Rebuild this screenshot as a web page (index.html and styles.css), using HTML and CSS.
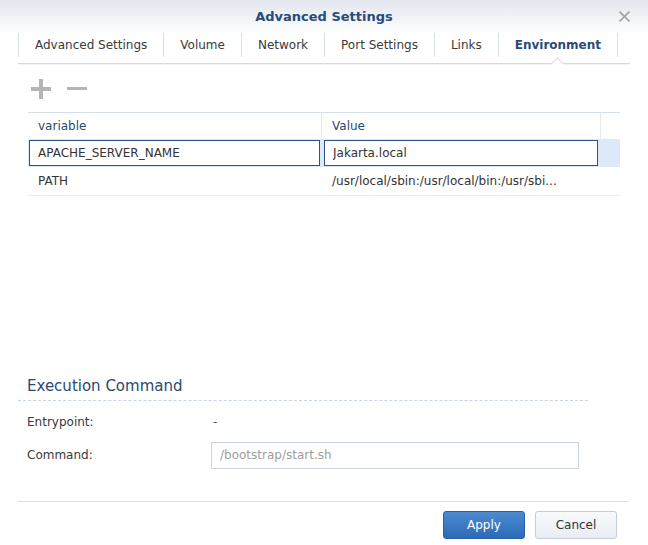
FILE: index.html
```html
<!DOCTYPE html>
<html lang="en">
<head>
    <meta charset="UTF-8">
    <meta name="viewport" content="width=device-width, initial-scale=1.0">
    <title>Advanced Settings</title>
    <link rel="stylesheet" href="styles.css">
</head>
<body>
    <div class="dialog">
        <div class="titlebar">
            <span></span>
            <h1 class="title">Advanced Settings</h1>
            <button class="close-button" title="Close">
                <svg width="11" height="11" viewBox="0 0 11 11">
                    <path d="M0.5 0.5 L10.5 10.5 M10.5 0.5 L0.5 10.5" stroke="#a3a3a3" stroke-width="1.6" fill="none"/>
                </svg>
            </button>
        </div>

        <div class="tabs">
            <div class="tab">Advanced Settings</div>
            <div class="tab">Volume</div>
            <div class="tab">Network</div>
            <div class="tab">Port Settings</div>
            <div class="tab">Links</div>
            <div class="tab active">Environment</div>
        </div>

        <div class="content">
            <div class="env-panel">
                <div class="toolbar">
                    <button class="icon-button" title="Add">
                        <svg width="20" height="20" viewBox="0 0 20 20">
                            <rect x="0" y="8" width="20" height="4" fill="#b5b5b5"/>
                            <rect x="8" y="0" width="4" height="20" fill="#b5b5b5"/>
                        </svg>
                    </button>
                    <button class="icon-button" title="Remove">
                        <svg width="20" height="20" viewBox="0 0 20 20">
                            <rect x="0" y="8" width="20" height="3" fill="#b5b5b5"/>
                        </svg>
                    </button>
                </div>

                <div class="grid">
                    <div class="grid-row grid-header">
                        <div class="cell col-var">variable</div>
                        <div class="cell col-val">Value</div>
                        <div class="cell col-scroll"></div>
                    </div>
                    <div class="grid-row selected">
                        <div class="cell col-var"><input class="cell-input" type="text" value="APACHE_SERVER_NAME"></div>
                        <div class="cell col-val"><input class="cell-input" type="text" value="Jakarta.local"></div>
                        <div class="cell col-scroll"></div>
                    </div>
                    <div class="grid-row last">
                        <div class="cell col-var">PATH</div>
                        <div class="cell col-val">/usr/local/sbin:/usr/local/bin:/usr/sbi...</div>
                        <div class="cell col-scroll"></div>
                    </div>
                </div>
            </div>

            <div class="exec-section">
                <h2 class="section-title">Execution Command</h2>
                <div class="field-grid">
                    <label class="field-label">Entrypoint:</label>
                    <span class="field-value">-</span>
                    <label class="field-label">Command:</label>
                    <input class="text-input" type="text" placeholder="/bootstrap/start.sh">
                </div>
            </div>
        </div>

        <div class="footer">
            <button class="btn btn-primary">Apply</button>
            <button class="btn">Cancel</button>
        </div>
    </div>
</body>
</html>
```

FILE: styles.css
```css
body {
    margin: 0;
    padding: 0;
    background-color: #ffffff;
    font-family: "DejaVu Sans", Verdana, sans-serif;
    font-size: 12px;
    color: #333333;
}

.dialog {
    width: 648px;
    height: 545px;
    display: flex;
    flex-direction: column;
    background: linear-gradient(#e1e6ed 0, #ffffff 34px);
}

.titlebar {
    height: 33px;
    display: grid;
    grid-template-columns: 32px 1fr 32px;
    align-items: center;
    padding: 0 8px;
}

.title {
    margin: 0;
    text-align: center;
    font-size: 13px;
    font-weight: bold;
    color: #2a4b79;
}

.close-button {
    width: 32px;
    height: 32px;
    padding: 0;
    border: none;
    background: none;
    display: flex;
    justify-content: center;
    align-items: center;
    cursor: pointer;
}

.tabs {
    display: flex;
    margin: 0 18px;
    padding-bottom: 6px;
    border-bottom: 1px solid #d9d9d9;
    box-shadow: 0 1px 1px rgba(0, 0, 0, 0.04);
}

.tab {
    position: relative;
    height: 24px;
    line-height: 24px;
    padding: 0 16px;
    border-left: 1px solid #d6dee7;
    color: #3a3a3a;
    cursor: pointer;
}

.tab:last-child {
    border-right: 1px solid #d6dee7;
}

.tab.active {
    font-weight: bold;
    color: #2a4b79;
}

.tab.active::after {
    content: "";
    position: absolute;
    box-sizing: border-box;
    width: 9px;
    height: 9px;
    left: calc(50% - 4.5px);
    top: 26px;
    background-color: #ffffff;
    border-left: 1px solid #d9d9d9;
    border-top: 1px solid #d9d9d9;
    transform: rotate(45deg);
}

.content {
    flex: 1;
    padding: 0 18px;
}

.env-panel {
    box-sizing: border-box;
    height: 312px;
    padding: 15px 10px 0 10px;
}

.toolbar {
    display: flex;
    gap: 16px;
    padding-left: 3px;
    height: 20px;
}

.icon-button {
    width: 20px;
    height: 20px;
    padding: 0;
    border: none;
    background: none;
    cursor: pointer;
}

.grid {
    margin-top: 13px;
    border-top: 1px solid #d5dfea;
}

.grid-row {
    display: flex;
    height: 28px;
    align-items: stretch;
}

.grid-row.last {
    height: 29px;
    border-bottom: 1px solid #e6e9ed;
    box-sizing: border-box;
}

.grid-header {
    height: 26px;
}

.grid-header .cell {
    color: #2c4a70;
}

.grid-header .col-var,
.grid-header .col-val {
    border-right: 1px solid #e3e9f0;
}

.grid-row.selected {
    background-color: #dde9f8;
}

.cell {
    display: flex;
    align-items: center;
    padding: 0 10px;
    box-sizing: border-box;
    white-space: nowrap;
    overflow: hidden;
}

.col-var {
    width: 294px;
}

.col-val {
    width: 279px;
}

.col-scroll {
    width: 16px;
    padding: 0;
}

.selected .col-var {
    padding: 1px 2px 1px 1px;
}

.selected .col-val {
    padding: 1px 3px 1px 2px;
}

.cell-input {
    width: 100%;
    height: 26px;
    box-sizing: border-box;
    margin: 0;
    padding: 0 8px;
    border: 1px solid #2b5185;
    outline: none;
    font-family: inherit;
    font-size: 12px;
    color: #333333;
    background-color: #ffffff;
}

.exec-section {
    width: 570px;
}

.section-title {
    margin: 0;
    padding: 0 0 4px 9px;
    line-height: 20px;
    font-size: 15px;
    font-weight: normal;
    color: #2a486e;
    border-bottom: 1px dashed #c9d5e2;
}

.field-grid {
    display: grid;
    grid-template-columns: 184px 368px;
    grid-template-rows: 24px 26px;
    row-gap: 8px;
    align-items: center;
    margin-top: 9px;
    padding-left: 9px;
}

.field-label {
    color: #3a3a3a;
}

.field-value {
    padding-left: 2px;
    color: #555555;
}

.text-input {
    height: 27px;
    box-sizing: border-box;
    margin: 0;
    padding: 0 8px;
    border: 1px solid #cbd3dc;
    font-family: inherit;
    font-size: 12px;
    color: #333333;
}

.text-input::placeholder {
    color: #9e9e9e;
}

.footer {
    display: flex;
    justify-content: flex-end;
    gap: 10px;
    margin: 0 20px 0 18px;
    padding: 9px 11px 6px 0;
    border-top: 1px solid #dedede;
}

.btn {
    width: 82px;
    height: 28px;
    border-radius: 3px;
    border: 1px solid #c4cdd8;
    background: linear-gradient(#f8fafc, #e8edf3);
    font-family: inherit;
    font-size: 12px;
    color: #333333;
    cursor: pointer;
}

.btn-primary {
    border-color: #2a609f;
    background: linear-gradient(#4c8bd2, #2c6ab8);
    color: #ffffff;
}
```
